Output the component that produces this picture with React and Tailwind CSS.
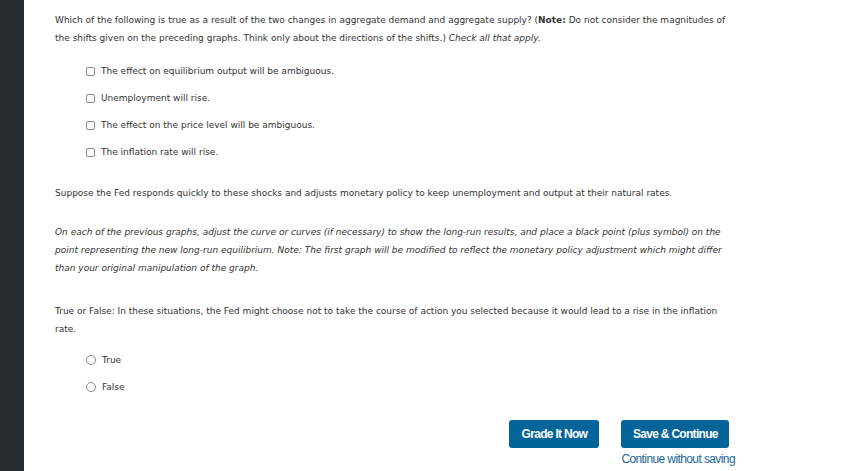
export default function App() {
  const checks = [
    'The effect on equilibrium output will be ambiguous.',
    'Unemployment will rise.',
    'The effect on the price level will be ambiguous.',
    'The inflation rate will rise.',
  ]

  return (
    <div className="flex min-h-[471px] bg-white text-[#333]">
      <div className="w-[24px] shrink-0 bg-[#262b2f]" />
      <div
        className="w-[716px] pl-[31px] pt-[11px] text-[9px] leading-[18px]"
        style={{ fontFamily: '"DejaVu Sans", Verdana, sans-serif' }}
      >
        <p>
          Which of the following is true as a result of the two changes in aggregate demand and aggregate supply? (
          <b>Note:</b> Do not consider the magnitudes of the shifts given on the preceding graphs. Think only about the
          directions of the shifts.) <i>Check all that apply.</i>
        </p>

        <div className="mt-[15px] flex flex-col gap-[9px] pl-[31px]">
          {checks.map((c) => (
            <label key={c} className="flex items-center gap-[6px]">
              <span className="h-[9px] w-[9px] rounded-[2px] border border-[#8a8a8a] bg-white" />
              {c}
            </label>
          ))}
        </div>

        <p className="mt-[23px]">
          Suppose the Fed responds quickly to these shocks and adjusts monetary policy to keep unemployment and output at
          their natural rates.
        </p>

        <p className="mt-[21px] italic">
          On each of the previous graphs, adjust the curve or curves (if necessary) to show the long-run results, and
          place a black point (plus symbol) on the point representing the new long-run equilibrium. Note: The first graph
          will be modified to reflect the monetary policy adjustment which might differ than your original manipulation
          of the graph.
        </p>

        <p className="mt-[26px] leading-[17.5px]">
          True or False: In these situations, the Fed might choose not to take the course of action you selected because
          it would lead to a rise in the inflation rate.
        </p>

        <div className="mt-[13px] flex flex-col gap-[9px] pl-[31px]">
          {['True', 'False'].map((r) => (
            <label key={r} className="flex items-center gap-[6px]">
              <span className="h-[10px] w-[10px] rounded-full border border-[#8a8a8a] bg-white" />
              {r}
            </label>
          ))}
        </div>

        <div
          className="mt-[24px] flex justify-end gap-[22px] pr-[5px]"
          style={{ fontFamily: '"Liberation Sans", Arial, sans-serif' }}
        >
          <div className="flex flex-col items-start">
            <button className="flex h-[28px] w-[90px] shrink-0 items-center justify-center rounded-[3px] bg-[#03649a] text-[12px] font-bold tracking-[-0.7px] text-white">
              Grade It Now
            </button>
          </div>
          <div className="flex flex-col items-start">
            <button className="flex h-[28px] w-[108px] shrink-0 items-center justify-center rounded-[3px] bg-[#03649a] text-[12px] font-bold tracking-[-0.7px] text-white">
              Save &amp; Continue
            </button>
            <a className="mt-[4px] text-[12px] leading-[14px] tracking-[-0.6px] text-[#1b6799]">Continue without saving</a>
          </div>
        </div>
      </div>
    </div>
  )
}
